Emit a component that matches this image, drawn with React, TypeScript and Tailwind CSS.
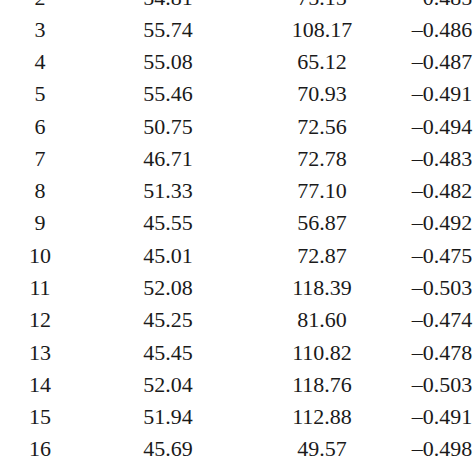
import React from "react";

const rows: [string, string, string, string][] = [
  ["2", "54.81", "75.15", "–0.485"],
  ["3", "55.74", "108.17", "–0.486"],
  ["4", "55.08", "65.12", "–0.487"],
  ["5", "55.46", "70.93", "–0.491"],
  ["6", "50.75", "72.56", "–0.494"],
  ["7", "46.71", "72.78", "–0.483"],
  ["8", "51.33", "77.10", "–0.482"],
  ["9", "45.55", "56.87", "–0.492"],
  ["10", "45.01", "72.87", "–0.475"],
  ["11", "52.08", "118.39", "–0.503"],
  ["12", "45.25", "81.60", "–0.474"],
  ["13", "45.45", "110.82", "–0.478"],
  ["14", "52.04", "118.76", "–0.503"],
  ["15", "51.94", "112.88", "–0.491"],
  ["16", "45.69", "49.57", "–0.498"],
];

export default function App() {
  return (
    <div className="w-[474px] h-[474px] overflow-hidden bg-white text-[#1a1a1a] text-[22px] font-['Liberation_Serif','Times_New_Roman',serif]">
      <div className="-mt-[18.4px] flex flex-col w-[496px]">
        {rows.map((r) => (
          <div key={r[0]} className="flex h-[32.27px] leading-[32.27px] whitespace-nowrap font-['Liberation_Serif','Times_New_Roman',serif]">
            <div className="w-[80px] text-center">{r[0]}</div>
            <div className="w-[176px] text-center">{r[1]}</div>
            <div className="w-[132px] text-center">{r[2]}</div>
            <div className="w-[108px] text-center">{r[3]}</div>
          </div>
        ))}
      </div>
    </div>
  );
}
